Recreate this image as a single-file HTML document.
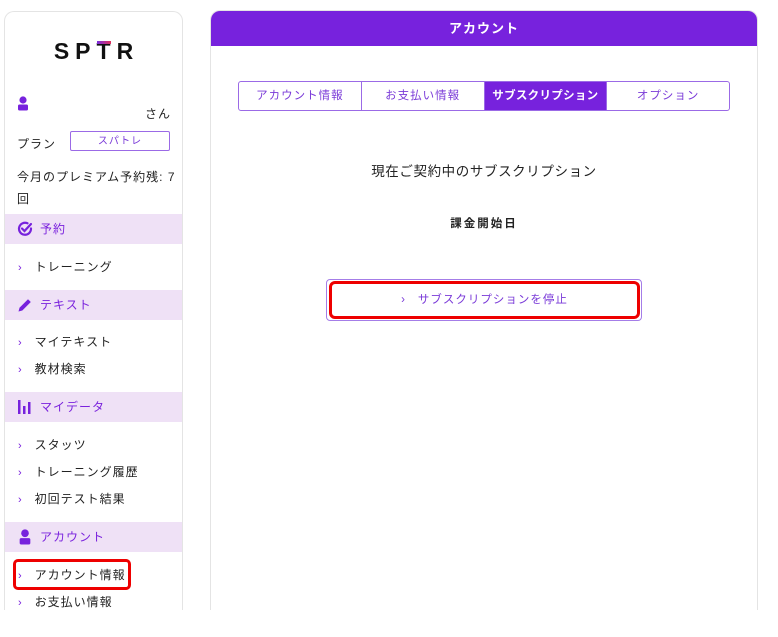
<!DOCTYPE html>
<html><head><meta charset="utf-8"><style>
*{box-sizing:border-box;margin:0;padding:0}
body{width:778px;height:637px;background:#fff;font-family:"Liberation Sans","Noto Sans CJK JP",sans-serif;color:#222;position:relative;overflow:hidden;font-size:12px;letter-spacing:1px}
.side{position:absolute;left:4px;top:11px;width:179px;height:599px;border:1px solid #e4e4e4;border-bottom:none;border-radius:10px 10px 0 0;overflow:hidden}
.logo{position:absolute;left:3px;width:100%;top:26px;text-align:center;font-size:23px;font-weight:bold;letter-spacing:6px;color:#111}
.logo span{color:#111;position:relative}
.logo span:before{content:"";position:absolute;left:0;right:6px;top:3px;height:3px;background:linear-gradient(90deg,#7a2ee0,#e0305a)}
.abs{position:absolute}
.hd{position:absolute;left:0;width:100%;height:30px;background:#efe1f6;color:#7a22dd;font-size:12px;line-height:30px;padding-left:35px}
.hd svg{position:absolute;left:12px;top:7px}
.it{position:absolute;left:13px;font-size:12px;line-height:14px}
.it:before{content:"›";color:#7a22dd;margin-right:12px;font-size:11px}
.main{position:absolute;left:210px;top:10px;width:548px;height:600px;border:1px solid #e4e4e4;border-bottom:none;border-radius:10px 10px 0 0;overflow:hidden}
.mh{height:35px;background:#7722dd;color:#fff;text-align:center;line-height:35px;font-weight:bold;font-size:13px}
.tabs{position:absolute;left:27px;top:70px;width:492px;height:30px;border:1px solid #9b6ae6;border-radius:3px;display:flex;overflow:hidden}
.tabs div{flex:1;text-align:center;line-height:28px;color:#7a3ad8;font-size:11.5px;border-left:1px solid #9b6ae6}
.tabs div:first-child{border-left:none}
.tabs .on{background:#7722dd;color:#fff;font-weight:bold;letter-spacing:0.3px}
</style></head><body>
<div class="side">
<div class="logo">SP<span>T</span>R</div>
<svg class="abs" style="left:12px;top:84px" width="12" height="15" viewBox="0 0 12 15"><circle cx="6" cy="4" r="3.6" fill="#7722dd"/><rect x="1" y="8.5" width="10" height="6" rx="1.5" fill="#7722dd"/></svg>
<div class="abs" style="left:140px;top:93px;font-size:12px">さん</div>
<div class="abs" style="left:12px;top:123px">プラン</div>
<div class="abs" style="left:65px;top:119px;width:100px;height:20px;border:1px solid #9b6ae6;border-radius:2px;text-align:center;line-height:19px;color:#7a3ad8;font-size:10px">スパトレ</div>
<div class="abs" style="left:12px;top:154px;line-height:22px;width:160px">今月のプレミアム予約残: 7<br>回</div>
<div class="hd" style="top:202px"><svg width="16" height="16" viewBox="0 0 16 16"><path d="M14 7.5A6 6 0 1 1 10.5 2.3" fill="none" stroke="#7722dd" stroke-width="2.2" stroke-linecap="round"/><path d="M5 7.5l2.5 2.5L14 3" fill="none" stroke="#7722dd" stroke-width="2.2" stroke-linecap="round"/></svg>予約</div>
<div class="it" style="top:248px">トレーニング</div>
<div class="hd" style="top:278px"><svg width="16" height="16" viewBox="0 0 16 16"><path d="M1.5 14.5l1-3.8L11 2.2l2.8 2.8L5.3 13.5z" fill="#7722dd"/></svg>テキスト</div>
<div class="it" style="top:323px">マイテキスト</div>
<div class="it" style="top:350px">教材検索</div>
<div class="hd" style="top:380px"><svg width="16" height="16" viewBox="0 0 16 16"><rect x="1" y="1" width="2.5" height="14" fill="#7722dd"/><rect x="6" y="7" width="2.5" height="8" fill="#7722dd"/><rect x="11" y="3" width="2.5" height="12" fill="#7722dd"/></svg>マイデータ</div>
<div class="it" style="top:426px">スタッツ</div>
<div class="it" style="top:453px">トレーニング履歴</div>
<div class="it" style="top:480px">初回テスト結果</div>
<div class="hd" style="top:510px"><svg width="16" height="16" viewBox="0 0 12 15"><circle cx="6" cy="4" r="3.6" fill="#7722dd"/><rect x="1" y="8.5" width="10" height="6" rx="1.5" fill="#7722dd"/></svg>アカウント</div>
<div class="it" style="top:556px">アカウント情報</div>
<div class="abs" style="left:8px;top:547px;width:118px;height:31px;border:3px solid #ee0000;border-radius:5px"></div>
<div class="it" style="top:583px">お支払い情報</div>
</div>
<div class="main">
<div class="mh">アカウント</div>
<div class="tabs"><div>アカウント情報</div><div>お支払い情報</div><div class="on">サブスクリプション</div><div>オプション</div></div>
<div class="abs" style="left:0;width:546px;top:149px;text-align:center;font-size:13.5px;letter-spacing:0.6px">現在ご契約中のサブスクリプション</div>
<div class="abs" style="left:0;width:546px;top:204px;text-align:center;font-weight:bold;font-size:11.5px;letter-spacing:2px">課金開始日</div>
<div class="abs" style="left:115px;top:268px;width:316px;height:42px;border:1px solid #a47de8;border-radius:4px"></div>
<div class="abs" style="left:118px;top:270px;width:311px;height:38px;border:3px solid #ee0000;border-radius:6px;text-align:center;line-height:32px;color:#7a3ad8;font-size:11.5px"><span style="margin-right:12px">›</span>サブスクリプションを停止</div>
</div>
</body></html>
